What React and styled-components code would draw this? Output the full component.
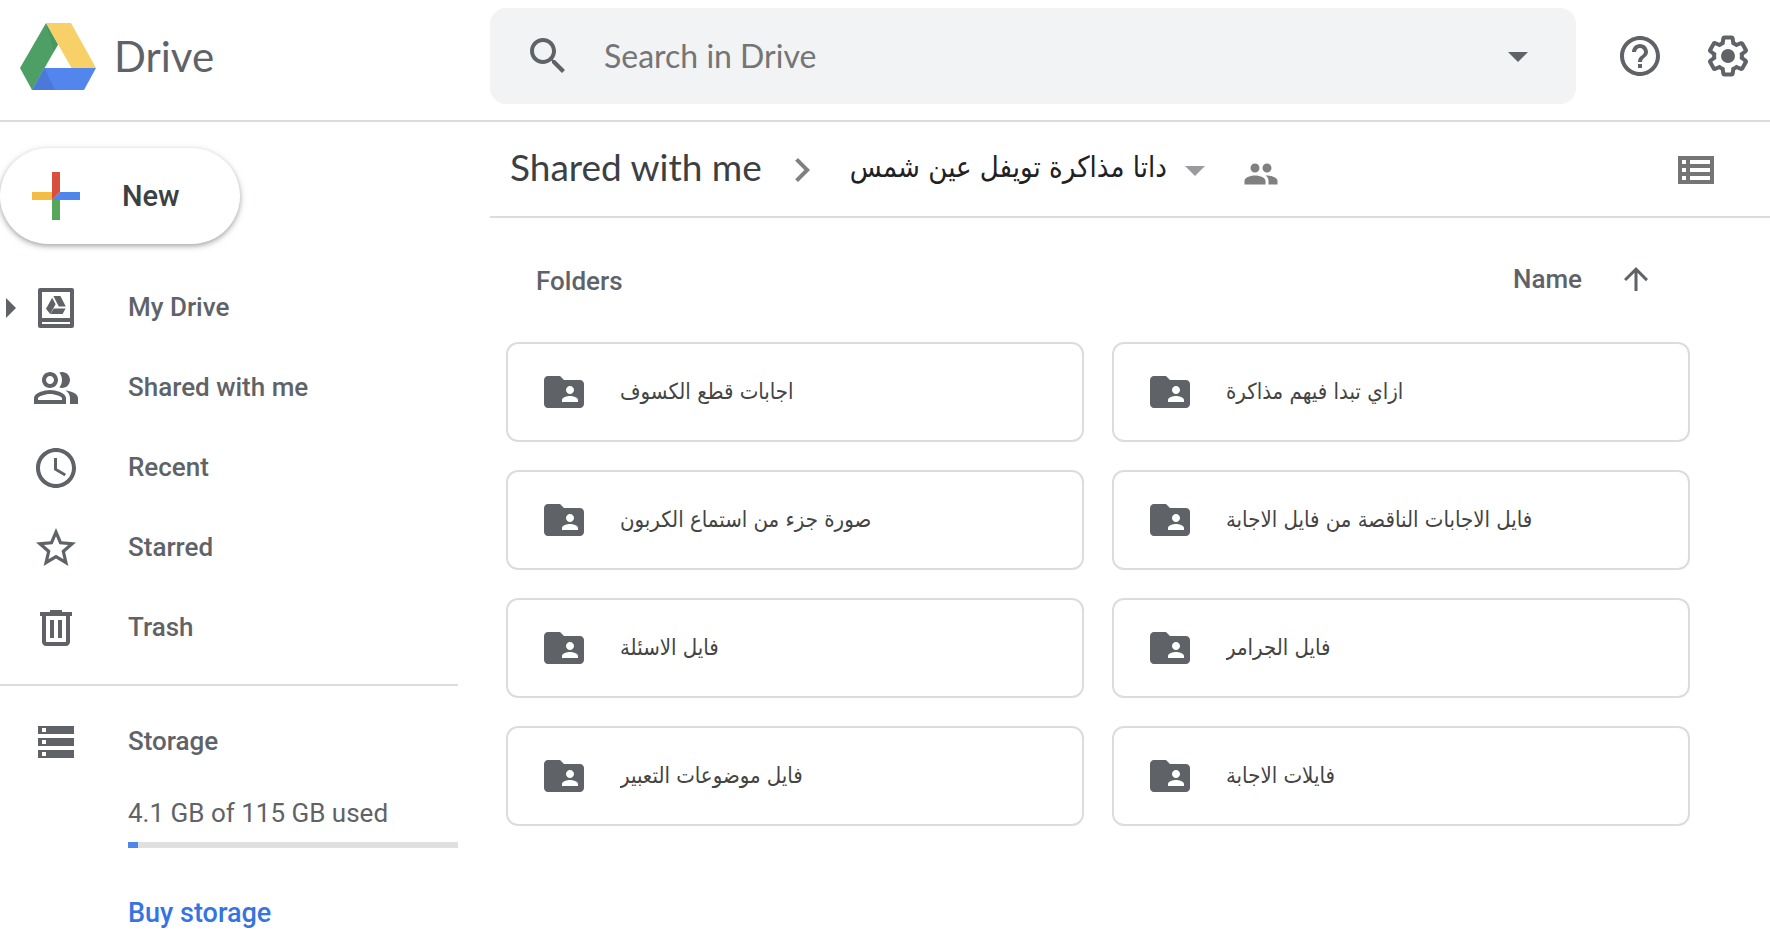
import React from "react";
import styled, { createGlobalStyle } from "styled-components";

const GlobalStyle = createGlobalStyle`
  *, *::before, *::after { box-sizing: border-box; }
  body {
    margin: 0;
    background: #fff;
    color: #5f6368;
    font-family: Roboto, "DejaVu Sans", sans-serif;
    font-size: 26px;
    line-height: 32px;
  }
  button { border: 0; padding: 0; background: none; color: inherit; font: inherit; cursor: pointer; }
  a { color: inherit; text-decoration: none; }
  ul, ol { list-style: none; margin: 0; padding: 0; }
  h1, h2, p { margin: 0; font: inherit; }
`;

const productFont = `Lato, "DejaVu Sans", sans-serif`;
const arabicFont = `"DejaVu Sans Condensed", "DejaVu Sans", sans-serif`;

const Glyph = styled.svg`
  display: block;
  flex: none;
  width: ${(p) => p.$size || 48}px;
  height: ${(p) => p.$size || 48}px;
  fill: currentColor;
`;

const Icon = ({ d, size, children }) => (
  <Glyph viewBox="0 0 24 24" $size={size} aria-hidden="true">
    {d && <path fillRule="evenodd" d={d} />}
    {children}
  </Glyph>
);

const paths = {
  search:
    "M15.5 14h-.79l-.28-.27C15.41 12.59 16 11.11 16 9.5 16 5.91 13.09 3 9.5 3S3 5.91 3 9.5 5.91 16 9.5 16c1.61 0 3.09-.59 4.23-1.57l.27.28v.79l5 4.99L20.49 19l-4.99-5zm-6 0C7.01 14 5 11.99 5 9.5S7.01 5 9.5 5 14 7.01 14 9.5 11.99 14 9.5 14z",
  down: "M7 10l5 5 5-5z",
  help:
    "M11 18h2v-2h-2v2zm1-16C6.48 2 2 6.48 2 12s4.48 10 10 10 10-4.48 10-10S17.52 2 12 2zm0 18c-4.41 0-8-3.59-8-8s3.59-8 8-8 8 3.59 8 8-3.59 8-8 8zm0-14c-2.21 0-4 1.79-4 4h2c0-1.1.9-2 2-2s2 .9 2 2c0 2-3 1.75-3 5h2c0-2.25 3-2.5 3-5 0-2.21-1.79-4-4-4z",
  gear:
    "M13.85 22.25h-3.7c-.74 0-1.36-.54-1.45-1.27l-.27-1.89c-.27-.14-.53-.29-.79-.46l-1.8.72c-.7.26-1.47-.03-1.81-.65L2.2 15.53c-.35-.66-.2-1.44.36-1.88l1.53-1.19c-.01-.15-.02-.3-.02-.46 0-.15.01-.31.02-.46l-1.52-1.19c-.59-.45-.74-1.26-.37-1.88l1.85-3.19c.34-.62 1.11-.9 1.79-.63l1.81.73c.26-.17.52-.32.78-.46l.27-1.91c.09-.7.71-1.25 1.44-1.25h3.7c.74 0 1.36.54 1.45 1.27l.27 1.89c.27.14.53.29.79.46l1.8-.72c.71-.26 1.48.03 1.82.65l1.84 3.18c.36.66.2 1.44-.36 1.88l-1.52 1.19c.01.15.02.3.02.46s-.01.31-.02.46l1.52 1.19c.56.45.72 1.23.37 1.86l-1.86 3.22c-.34.62-1.11.9-1.8.63l-1.8-.72c-.26.17-.52.32-.78.46l-.27 1.91c-.1.68-.72 1.22-1.46 1.22zm-3.23-2h2.76l.37-2.55.53-.22c.44-.18.88-.44 1.34-.78l.45-.34 2.38.96 1.38-2.4-2.03-1.58.07-.56c.03-.26.06-.51.06-.78s-.03-.53-.06-.78l-.07-.56 2.03-1.58-1.39-2.4-2.39.96-.45-.35c-.42-.32-.87-.58-1.33-.77l-.52-.22-.37-2.55h-2.76l-.37 2.55-.53.21c-.44.19-.88.44-1.34.79l-.45.33-2.38-.95-1.39 2.39 2.03 1.58-.07.56a7 7 0 0 0-.06.79c0 .26.02.53.06.78l.07.56-2.03 1.58 1.38 2.4 2.39-.96.45.35c.43.33.86.58 1.33.77l.53.22.38 2.55z",
  chevron: "M10 6L8.59 7.41 13.17 12l-4.58 4.59L10 18l6-6z",
  group:
    "M16 11c1.66 0 2.99-1.34 2.99-3S17.66 5 16 5c-1.66 0-3 1.34-3 3s1.34 3 3 3zm-8 0c1.66 0 2.99-1.34 2.99-3S9.66 5 8 5C6.34 5 5 6.34 5 8s1.34 3 3 3zm0 2c-2.33 0-7 1.17-7 3.5V19h14v-2.5c0-2.33-4.67-3.5-7-3.5zm8 0c-.29 0-.62.02-.97.05 1.16.84 1.97 1.97 1.97 3.45V19h6v-2.5c0-2.33-4.67-3.5-7-3.5z",
  list: "M3 5h18v14H3zM5 7v2h2V7zM9 7v2h10V7zM5 11v2h2v-2zM9 11v2h10v-2zM5 15v2h2v-2zM9 15v2h10v-2z",
  up: "M4 12l1.41 1.41L11 7.83V20h2V7.83l5.58 5.59L20 12l-8-8-8 8z",
  drive:
    "M4 2h16c.55 0 1 .45 1 1v18c0 .55-.45 1-1 1H4c-.55 0-1-.45-1-1V3c0-.55.45-1 1-1zM5 4v13h14V4zM5 19v1h14v-1zM10.7 6h3.5l2.7 5.2h-3.5zM10.1 6.9l1.7 3.2-2.7 4.9-2.1-2.6zM10.9 12.2h5.9L15.3 15H9.2z",
  people:
    "M9 12c2.21 0 4-1.79 4-4s-1.79-4-4-4-4 1.79-4 4 1.79 4 4 4zm0-6c1.1 0 2 .9 2 2s-.9 2-2 2-2-.9-2-2 .9-2 2-2zM9 13c-2.67 0-8 1.34-8 4v3h16v-3c0-2.66-5.33-4-8-4zm6 5H3v-.99C3.2 16.29 6.3 15 9 15s5.8 1.29 6 2v1zM15 12c2.21 0 4-1.79 4-4s-1.79-4-4-4c-.47 0-.91.1-1.33.24C14.5 5.27 15 6.58 15 8s-.5 2.73-1.33 3.76c.42.14.86.24 1.33.24zM16.67 13.13C18.04 14.06 19 15.32 19 17v3h4v-3c0-2.18-3.58-3.47-6.33-3.87z",
  clock:
    "M11.99 2C6.47 2 2 6.48 2 12s4.47 10 9.99 10C17.52 22 22 17.52 22 12S17.52 2 11.99 2zM12 20c-4.42 0-8-3.58-8-8s3.58-8 8-8 8 3.58 8 8-3.58 8-8 8zm.5-13H11v6l5.25 3.15.75-1.23-4.5-2.67z",
  star:
    "M22 9.24l-7.19-.62L12 2 9.19 8.63 2 9.24l5.46 4.73L5.82 21 12 17.27 18.18 21l-1.63-7.03L22 9.24zM12 15.4l-3.76 2.27 1-4.28-3.32-2.88 4.38-.38L12 6.1l1.71 4.04 4.38.38-3.32 2.88 1 4.28L12 15.4z",
  trash:
    "M15 4V3H9v1H4v2h1v13c0 1.1.9 2 2 2h10c1.1 0 2-.9 2-2V6h1V4h-5zm2 15H7V6h10v13zM9 8h2v9H9zM13 8h2v9h-2z",
  storage:
    "M3 20h18v-4H3v4zm2-3h2v2H5v-2zM3 4v4h18V4H3zm4 3H5V5h2v2zm-4 7h18v-4H3v4zm2-3h2v2H5v-2z",
  folder:
    "M20 6h-8l-2-2H4c-1.1 0-1.99.9-1.99 2L2 18c0 1.1.9 2 2 2h16c1.1 0 2-.9 2-2V8c0-1.1-.9-2-2-2zm-5 3c1.1 0 2 .9 2 2s-.9 2-2 2-2-.9-2-2 .9-2 2-2zm4 8h-8v-1c0-1.33 2.67-2 4-2s4 .67 4 2v1z",
};

/* ---------- header ---------- */

const Header = styled.header`
  display: flex;
  align-items: center;
  height: 122px;
  padding: 0 18px 8px 0;
  border-bottom: 2px solid #dadce0;
`;

const Brand = styled.a`
  display: flex;
  align-items: center;
  flex: none;
  gap: 18px;
  width: 490px;
  padding-left: 20px;
  font-family: ${productFont};
  font-size: 42px;
  line-height: 56px;
`;

const Logo = styled.svg`
  display: block;
  width: 76px;
  height: 67px;
`;

const SearchBar = styled.form`
  display: flex;
  align-items: center;
  flex: 1;
  min-width: 0;
  height: 96px;
  padding: 0 34px;
  border-radius: 16px;
  background: #f1f3f4;
`;

const SearchInput = styled.input`
  flex: 1;
  min-width: 0;
  margin: 0 32px;
  padding: 0;
  border: 0;
  outline: 0;
  background: none;
  color: #3c4043;
  font-family: ${productFont};
  font-size: 32px;
  line-height: 40px;
  &::placeholder { color: #757575; opacity: 1; }
`;

const HeaderActions = styled.div`
  display: flex;
  gap: 40px;
  margin-left: 40px;
`;

const IconButton = styled.button`
  display: block;
  flex: none;
  color: ${(p) => p.$color || "#5f6368"};
`;

/* ---------- sidebar ---------- */

const Body = styled.div`
  display: flex;
  gap: 32px;
`;

const Sidebar = styled.aside`
  flex: none;
  width: 458px;
  padding-top: 26px;
`;

const NewButton = styled.button`
  display: flex;
  align-items: center;
  gap: 30px;
  width: 240px;
  height: 96px;
  margin-bottom: 24px;
  padding-left: 20px;
  border-radius: 48px;
  background: #fff;
  box-shadow: 0 2px 4px rgba(60, 64, 67, 0.3), 0 2px 6px 1px rgba(60, 64, 67, 0.18);
  color: #3c4043;
  font-size: 29px;
  font-weight: 500;
`;

const Plus = styled.svg`
  display: block;
  width: 72px;
  height: 72px;
`;

const NavRow = styled.a`
  display: grid;
  grid-template-columns: 32px 48px 1fr;
  align-items: center;
  height: 80px;
  font-weight: 500;
`;

const Expander = styled.svg`
  display: block;
  width: 10px;
  height: 20px;
  margin-left: 6px;
  fill: currentColor;
`;

const NavLabel = styled.span`
  padding: 0 0 2px 48px;
`;

const Storage = styled.section`
  margin-top: 16px;
  padding-top: 16px;
  border-top: 2px solid #dadce0;
`;

const StorageDetails = styled.div`
  padding-left: 128px;
`;

const StorageUsed = styled.p`
  margin: 15px 0 13px;
`;

const Meter = styled.div`
  height: 6px;
  background: #e0e0e0;
`;

const MeterFill = styled.div`
  height: 100%;
  background: #4f86ec;
`;

const BuyLink = styled.a`
  display: inline-block;
  margin-top: 49px;
  color: #3574e2;
  font-size: 27px;
  font-weight: 500;
`;

/* ---------- content ---------- */

const Main = styled.main`
  flex: 1;
  min-width: 0;
`;

const Toolbar = styled.div`
  display: flex;
  align-items: center;
  justify-content: space-between;
  height: 96px;
  padding: 2px 50px 0 20px;
  border-bottom: 2px solid #dadce0;
`;

const Crumbs = styled.nav`
  display: flex;
  align-items: center;
  color: #3c4043;
  line-height: 48px;
`;

const CrumbLink = styled.a`
  padding-bottom: 6px;
  font-family: ${productFont};
  font-size: 37px;
`;

const Separator = styled.span`
  margin: 0 24px 0 16px;
  color: #808080;
`;

const CrumbMenu = styled.button`
  display: flex;
  align-items: center;
  gap: 4px;
  margin-right: 24px;
  color: #999b9e;
`;

const CrumbTitle = styled.span`
  padding-bottom: 6px;
  color: #202124;
  font-family: ${arabicFont};
  font-size: 29px;
`;

const People = styled(IconButton)`
  margin-top: 8px;
`;

const ListHeader = styled.div`
  display: flex;
  align-items: center;
  justify-content: space-between;
  height: 124px;
  padding: 0 116px 0 46px;
  font-weight: 500;
`;

const ListTitle = styled.h2`
  padding-top: 2px;
`;

const SortButton = styled.button`
  display: flex;
  align-items: center;
  gap: 36px;
  padding-bottom: 2px;
`;

const FolderGrid = styled.ul`
  display: grid;
  grid-template-columns: 1fr 1fr;
  gap: 28px;
  padding: 0 80px 28px 16px;
`;

const FolderCard = styled.button`
  display: flex;
  align-items: center;
  gap: 32px;
  width: 100%;
  height: 100px;
  padding: 0 32px;
  border: 2px solid #dadce0;
  border-radius: 12px;
`;

const FolderName = styled.span`
  overflow: hidden;
  color: #444;
  font-family: ${arabicFont};
  font-size: 22px;
  text-overflow: ellipsis;
  white-space: nowrap;
`;

const navItems = [
  { label: "My Drive", icon: paths.drive, expandable: true },
  { label: "Shared with me", icon: paths.people },
  { label: "Recent", icon: paths.clock },
  { label: "Starred", icon: paths.star },
  { label: "Trash", icon: paths.trash },
];

const folders = [
  "اجابات قطع الكسوف",
  "ازاي تبدا فيهم مذاكرة",
  "صورة جزء من استماع الكربون",
  "فايل الاجابات الناقصة من فايل الاجابة",
  "فايل الاسئلة",
  "فايل الجرامر",
  "فايل موضوعات التعبير",
  "فايلات الاجابة",
];

const storage = { used: 4.1, total: 115, barPercent: 3 };

const DriveLogo = () => (
  <Logo viewBox="0 0 76 67" aria-hidden="true">
    <path fill="#4e9f66" d="M26 0L38 21.500 12 67 0 45z" />
    <path fill="#3f8f57" d="M26 0L38 21.500 34 28.500z" opacity="0.5" />
    <path fill="#f7d067" d="M26 0H51L76 45H51.500z" />
    <path fill="#5286ec" d="M24.500 45H76L64 67H12z" />
    <path fill="#4a76d4" d="M24.500 45L35 67H12z" opacity="0.8" />
  </Logo>
);

export default function App() {
  return (
    <>
      <GlobalStyle />
      <Header>
        <Brand href="#drive">
          <DriveLogo />
          Drive
        </Brand>
        <SearchBar role="search" onSubmit={(e) => e.preventDefault()}>
          <IconButton type="submit" aria-label="Search">
            <Icon d={paths.search} />
          </IconButton>
          <SearchInput type="text" placeholder="Search in Drive" aria-label="Search in Drive" />
          <IconButton type="button" aria-label="Search options">
            <Icon d={paths.down} />
          </IconButton>
        </SearchBar>
        <HeaderActions>
          <IconButton type="button" aria-label="Support">
            <Icon d={paths.help} />
          </IconButton>
          <IconButton type="button" aria-label="Settings">
            <Icon d={paths.gear}>
              <circle cx="12" cy="12" r="3.5" />
            </Icon>
          </IconButton>
        </HeaderActions>
      </Header>
      <Body>
        <Sidebar>
          <NewButton type="button">
            <Plus viewBox="0 0 36 36" aria-hidden="true">
              <path fill="#58a55c" d="M16 16v14h4V20z" />
              <path fill="#4f86ec" d="M30 16H20l-4 4h14z" />
              <path fill="#f2bd42" d="M6 16v4h10l4-4z" />
              <path fill="#d9503f" d="M20 16V6h-4v14z" />
            </Plus>
            New
          </NewButton>
          <nav aria-label="Drive sections">
            <ul>
              {navItems.map((item) => (
                <li key={item.label}>
                  <NavRow href="#section">
                    <span>
                      {item.expandable && (
                        <Expander viewBox="0 0 10 20" aria-hidden="true">
                          <path d="M0 0l10 10L0 20z" />
                        </Expander>
                      )}
                    </span>
                    <Icon d={item.icon} />
                    <NavLabel>{item.label}</NavLabel>
                  </NavRow>
                </li>
              ))}
            </ul>
          </nav>
          <Storage>
            <NavRow href="#storage">
              <span />
              <Icon d={paths.storage} />
              <NavLabel>Storage</NavLabel>
            </NavRow>
            <StorageDetails>
              <StorageUsed>
                {`${storage.used} GB of ${storage.total} GB used`}
              </StorageUsed>
              <Meter
                role="meter"
                aria-label="Storage used"
                aria-valuemin={0}
                aria-valuemax={storage.total}
                aria-valuenow={storage.used}
              >
                <MeterFill style={{ width: `${storage.barPercent}%` }} />
              </Meter>
              <BuyLink href="#buy">Buy storage</BuyLink>
            </StorageDetails>
          </Storage>
        </Sidebar>
        <Main>
          <Toolbar>
            <Crumbs aria-label="Breadcrumb">
              <CrumbLink href="#shared">Shared with me</CrumbLink>
              <Separator>
                <Icon d={paths.chevron} />
              </Separator>
              <CrumbMenu type="button">
                <CrumbTitle dir="rtl" lang="ar">داتا مذاكرة تويفل عين شمس</CrumbTitle>
                <Icon d={paths.down} />
              </CrumbMenu>
              <People type="button" $color="#808080" aria-label="Manage people">
                <Icon d={paths.group} size={36} />
              </People>
            </Crumbs>
            <IconButton type="button" $color="#757575" aria-label="List view">
              <Icon d={paths.list} />
            </IconButton>
          </Toolbar>
          <ListHeader>
            <ListTitle>Folders</ListTitle>
            <SortButton type="button">
              Name
              <Icon d={paths.up} size={36} />
            </SortButton>
          </ListHeader>
          <FolderGrid>
            {folders.map((name) => (
              <li key={name}>
                <FolderCard type="button">
                  <Icon d={paths.folder} />
                  <FolderName dir="rtl" lang="ar">{name}</FolderName>
                </FolderCard>
              </li>
            ))}
          </FolderGrid>
        </Main>
      </Body>
    </>
  );
}
